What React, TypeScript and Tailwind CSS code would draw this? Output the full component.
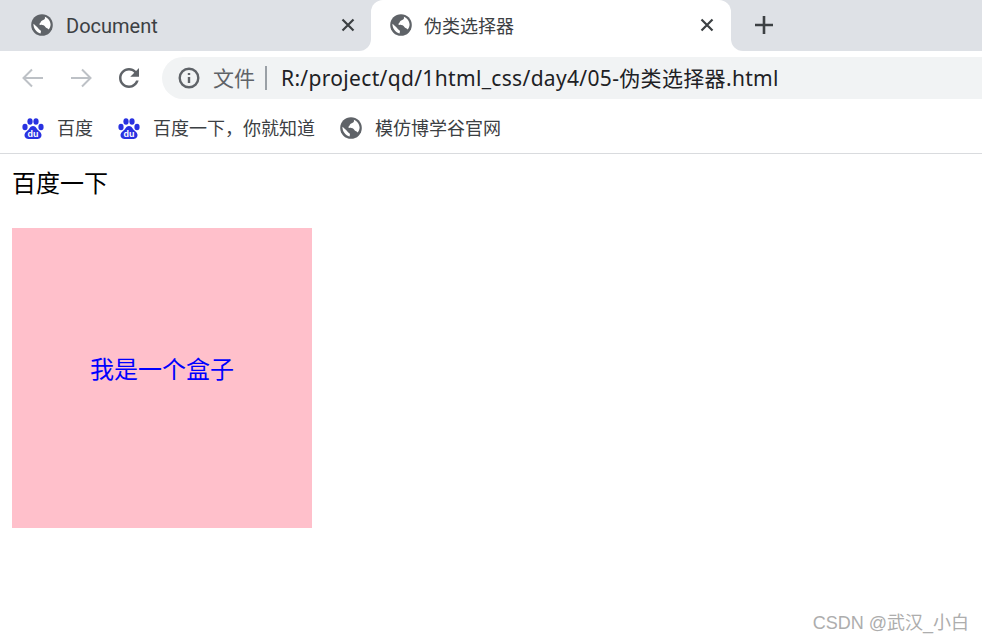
const FONT = 'font-["Noto_Sans","Noto_Sans_CJK_SC",sans-serif]'

function Globe({ className = '' }: { className?: string }) {
  return (
    <svg viewBox="0 0 24 24" className={`w-[24px] h-[24px] ${className}`}>
      <circle cx="12" cy="12" r="10.8" fill="#5f6368" />
      <path
        d="M3.4 10.8 C5 12.2 7 13.6 8.2 15.2 C9 16.4 10.2 17 11 18 L10.6 20.4 C6.6 19.6 3.4 15.6 3.4 10.8 Z M14.8 3.8 C15.4 5.4 14.8 6.6 13.2 7 C11.6 7.4 11 8.4 10.4 9.8 C9.8 10.6 9 11 9.4 11.6 C11 12.6 13.6 11.6 14.6 13 C15.4 14.2 16 15 17.6 15.6 L18.6 16.6 C19.8 15.2 20.6 13.4 20.6 11.6 C20.4 8 18 5 14.8 3.8 Z"
        fill="#fff"
      />
    </svg>
  )
}

function Paw() {
  return (
    <svg viewBox="0 0 24 24" className="w-[24px] h-[24px]">
      <g fill="#2932e1">
        <ellipse cx="4" cy="11" rx="2.6" ry="3.2" />
        <ellipse cx="9" cy="5.5" rx="2.6" ry="3.3" />
        <ellipse cx="15" cy="5.5" rx="2.6" ry="3.3" />
        <ellipse cx="20" cy="11" rx="2.6" ry="3.2" />
        <path d="M12 10 C9 10 8.5 13 6.5 14.5 C4.5 16 3.5 17.5 3.5 19 C3.5 22 6 23 8 23 L16 23 C18 23 20.5 22 20.5 19 C20.5 17.5 19.5 16 17.5 14.5 C15.5 13 15 10 12 10 Z" />
      </g>
      <text x="12" y="21" textAnchor="middle" fontSize="9" fontWeight="700" fill="#fff" fontFamily="Liberation Sans, sans-serif">
        du
      </text>
    </svg>
  )
}

function Close() {
  return (
    <svg viewBox="0 0 14 14" className="w-[14px] h-[14px]">
      <path d="M1.5 1.5 L12.5 12.5 M12.5 1.5 L1.5 12.5" stroke="#3c4043" strokeWidth="2.2" fill="none" />
    </svg>
  )
}

function Bookmark({ icon, label, className = '' }: { icon: React.ReactNode; label: string; className?: string }) {
  return (
    <div className={`flex items-center ${className}`}>
      {icon}
      <span className="ml-[12px] text-[18px] leading-[24px] text-[#3c4043]">{label}</span>
    </div>
  )
}

export default function App() {
  return (
    <div className={`w-[982px] h-[642px] overflow-hidden bg-white flex flex-col ${FONT}`}>
      {/* Tab strip */}
      <div className="h-[51px] flex shrink-0 bg-white">
        <div className="w-[371px] bg-[#dee1e6] rounded-br-[12px] flex items-center pl-[30px] pr-[16px] pb-[2px]">
          <Globe />
          <span className="ml-[12px] mt-[2px] text-[20px] text-[#3c4043] flex-1 font-['Roboto',sans-serif]">Document</span>
          <Close />
        </div>
        <div className="w-[360px] bg-[#dee1e6]">
          <div className="h-full bg-white rounded-t-[12px] flex items-center pl-[18px] pr-[17px] pb-[2px]">
            <Globe />
            <span className="ml-[11px] mt-[3px] text-[18px] text-[#3c4043] flex-1">伪类选择器</span>
            <Close />
          </div>
        </div>
        <div className="flex-1 bg-[#dee1e6] rounded-bl-[12px] flex items-center pl-[23px] pb-[2px]">
          <svg viewBox="0 0 20 20" className="w-[20px] h-[20px]">
            <path d="M10 1 V19 M1 10 H19" stroke="#3c4043" strokeWidth="2.6" fill="none" />
          </svg>
        </div>
      </div>

      {/* Toolbar */}
      <div className="h-[54px] shrink-0 flex items-center pl-[21px]">
        <svg viewBox="0 0 24 24" className="w-[24px] h-[24px]">
          <path d="M22 12 H3 M11 3.5 L2.5 12 L11 20.5" stroke="#bdc1c6" strokeWidth="2" fill="none" />
        </svg>
        <svg viewBox="0 0 24 24" className="w-[24px] h-[24px] ml-[24px]">
          <path d="M2 12 H21 M13 3.5 L21.5 12 L13 20.5" stroke="#bdc1c6" strokeWidth="2" fill="none" />
        </svg>
        <svg viewBox="0 0 24 24" className="w-[24px] h-[24px] ml-[24px]">
          <path
            d="M17.65 6.35C16.2 4.9 14.21 4 12 4c-4.42 0-7.99 3.58-7.99 8s3.57 8 7.99 8c3.73 0 6.84-2.55 7.73-6h-2.08c-.82 2.33-3.04 4-5.65 4-3.31 0-6-2.69-6-6s2.69-6 6-6c1.66 0 3.14.69 4.22 1.78L13 11h7V4l-2.35 2.35z"
            fill="#5f6368"
            transform="translate(-3 -3) scale(1.25)"
          />
        </svg>
        <div className="ml-[21px] flex-1 h-[42px] bg-[#f1f3f4] rounded-l-[21px] flex items-center pl-[16px]">
          <svg viewBox="0 0 22 22" className="w-[22px] h-[22px]">
            <circle cx="11" cy="11" r="9.3" stroke="#5f6368" strokeWidth="2.4" fill="none" />
            <path d="M11 10 V16 M11 6 V8" stroke="#5f6368" strokeWidth="2.4" fill="none" />
          </svg>
          <span className="ml-[13px] mt-[2px] text-[21px] text-[#5f6368]">文件</span>
          <span className="ml-[10px] w-[2px] h-[24px] bg-[#9aa0a6]" />
          <span className="ml-[14px] mt-[2px] text-[21px] tracking-[0.33px] text-[#202124] whitespace-nowrap">
            R:/project/qd/1html_css/day4/05-伪类选择器.html
          </span>
        </div>
      </div>

      {/* Bookmarks */}
      <div className="h-[49px] shrink-0 flex items-center pl-[21px] pb-[2px] border-b border-[#d9dbde]">
        <Bookmark icon={<Paw />} label="百度" />
        <Bookmark icon={<Paw />} label="百度一下，你就知道" className="ml-[24px]" />
        <Bookmark icon={<Globe />} label="模仿博学谷官网" className="ml-[24px]" />
      </div>

      {/* Page */}
      <div className="relative flex-1 px-[12px] text-[24px] text-black font-['Noto_Sans_CJK_SC',sans-serif]">
        <div className="mt-[12px] leading-[32px]">百度一下</div>
        <div className="mt-[30px] w-[300px] h-[300px] bg-[pink] text-center text-[#0000ff] leading-[280px]">
          我是一个盒子
        </div>
        <div className="absolute right-[13px] bottom-[7px] text-[18px] leading-[24px] text-[#adadad] font-['Liberation_Sans','Noto_Sans_CJK_SC',sans-serif]">
          CSDN @武汉_小白
        </div>
      </div>
    </div>
  )
}
